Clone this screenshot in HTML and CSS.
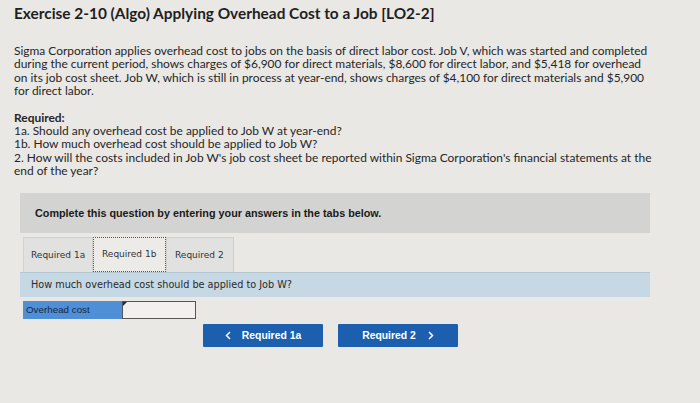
FILE: index.html
```html
<!DOCTYPE html>
<html>
<head>
<meta charset="utf-8">
<link rel="stylesheet" href="styles.css">
</head>
<body>
<div class="page">
  <h1 class="title">Exercise 2-10 (Algo) Applying Overhead Cost to a Job [LO2-2]</h1>
  <p class="intro">Sigma Corporation applies overhead cost to jobs on the basis of direct labor cost. Job V, which was started and completed<br>during the current period, shows charges of $6,900 for direct materials, $8,600 for direct labor, and $5,418 for overhead<br>on its job cost sheet. Job W, which is still in process at year-end, shows charges of $4,100 for direct materials and $5,900<br>for direct labor.</p>
  <div class="required">
    <div class="req-head">Required:</div>
    <div>1a. Should any overhead cost be applied to Job W at year-end?</div>
    <div>1b. How much overhead cost should be applied to Job W?</div>
    <div>2. How will the costs included in Job W's job cost sheet be reported within Sigma Corporation's financial statements at the<br>end of the year?</div>
  </div>
  <div class="question">
    <div class="banner">Complete this question by entering your answers in the tabs below.</div>
    <div class="tabs">
      <div class="tab">Required 1a</div>
      <div class="tab active">Required 1b</div>
      <div class="tab">Required 2</div>
    </div>
    <div class="prompt">How much overhead cost should be applied to Job W?</div>
    <div class="answer-row">
      <div class="label">Overhead cost</div>
      <div class="input"><span class="marker"></span></div>
    </div>
    <div class="nav">
      <div class="btn"><svg class="chev" width="6" height="9" viewBox="0 0 6 9"><path d="M5 1 L1.5 4.5 L5 8" fill="none" stroke="#fff" stroke-width="1.5"/></svg>Required 1a</div>
      <div class="btn">Required 2<svg class="chev right" width="6" height="9" viewBox="0 0 6 9"><path d="M1 1 L4.5 4.5 L1 8" fill="none" stroke="#fff" stroke-width="1.5"/></svg></div>
    </div>
  </div>
</div>
</body>
</html>
```
FILE: styles.css
```css
html, body {
  margin: 0;
  padding: 0;
  background: #e9e8e5;
}
.page {
  padding: 4px 14px 0 14px;
  color: #222;
  font-family: Lato, "Open Sans", sans-serif;
}
.title {
  margin: 0;
  font-size: 15.4px;
  font-weight: 700;
  line-height: 18px;
  color: #1f1f1f;
}
.intro {
  margin: 22px 0 0 0;
  font-size: 11.95px;
  line-height: 13.4px;
  width: 672px;
  white-space: nowrap;
  color: #262626;
}
.required {
  margin-top: 13px;
  font-size: 11.95px;
  line-height: 13.4px;
  width: 672px;
  white-space: nowrap;
  color: #262626;
}
.req-head {
  font-weight: 700;
}
.question {
  margin-top: 15px;
  margin-left: 6px;
  width: 630px;
}
.banner {
  background: #d3d3d1;
  height: 40px;
  display: flex;
  align-items: center;
  padding-left: 15px;
  font-family: "Liberation Sans", Arial, sans-serif;
  font-weight: 700;
  font-size: 10.8px;
  color: #1a1a1a;
}
.tabs {
  display: flex;
  margin-top: 4px;
  margin-left: 3px;
  height: 35px;
}
.tab {
  background: #e1e1df;
  border: 1px solid #d0d0ce;
  border-bottom: none;
  display: flex;
  align-items: center;
  padding: 0 8px;
  font-family: "DejaVu Sans", Verdana, sans-serif;
  font-size: 9px;
  color: #333;
  white-space: nowrap;
}
.tab:first-child { width: 55px; padding: 0 6px 0 7px; }
.tab.active {
  background: #ecebe8;
  border: 1px dotted #555;
  width: 55px;
}
.tab:last-child { width: 50px; }
.prompt {
  background: #c6d8e3;
  border-top: 1px solid #b4c6d2;
  height: 24px;
  display: flex;
  align-items: center;
  padding-left: 11px;
  font-family: "DejaVu Sans", Verdana, sans-serif;
  font-size: 9.7px;
  color: #2a2a2a;
}
.answer-row {
  display: flex;
  margin-top: 4px;
  margin-left: 3px;
  height: 18px;
}
.label {
  width: 96px;
  background: #4f8fd6;
  display: flex;
  align-items: center;
  padding-left: 3px;
  font-family: "Liberation Sans", Arial, sans-serif;
  font-size: 9.8px;
  color: #172848;
}
.input {
  position: relative;
  background: #f1f0ee;
  border: 1px solid #555;
  box-sizing: border-box;
  width: 74px;
}
.marker {
  position: absolute;
  left: 0;
  top: 0;
  width: 0;
  height: 0;
  border-top: 4px solid #1a2f55;
  border-right: 4px solid transparent;
}
.nav {
  display: flex;
  gap: 15px;
  margin-top: 5px;
  margin-left: 183px;
}
.btn {
  width: 120px;
  height: 23px;
  background: #1b5fae;
  border-radius: 1px;
  display: flex;
  align-items: center;
  justify-content: center;
  color: #fff;
  font-family: "Liberation Sans", Arial, sans-serif;
  font-weight: 700;
  font-size: 10.4px;
}
.chev {
  margin-right: 11px;
}
.chev.right {
  margin-right: 0;
  margin-left: 12px;
}
```
